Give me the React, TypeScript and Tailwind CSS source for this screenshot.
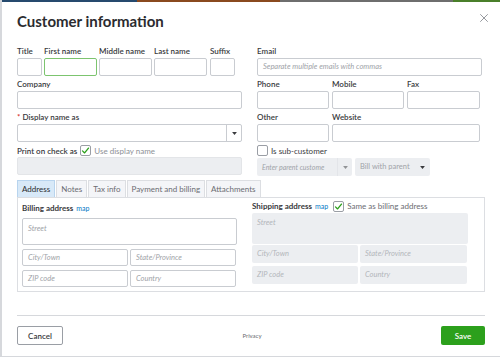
import React from 'react';

const Label: React.FC<{ children: React.ReactNode; className?: string }> = ({ children, className = '' }) => (
    <div className={`h-[12px] leading-[12px] text-[8px] font-semibold text-[#393a3d] ${className}`}>{children}</div>
);

const Input: React.FC<{ className?: string; placeholder?: string; disabled?: boolean }> = ({ className = '', placeholder, disabled }) => (
    <div
        className={`h-[18px] rounded-[2px] border flex items-center px-[5px] text-[7.5px] italic text-[#a0a3a8] ${
            disabled ? 'bg-[#eceef1] border-[#e3e5e8]' : 'bg-white border-[#c9ccd1]'
        } ${className}`}
    >
        {placeholder}
    </div>
);

const Check: React.FC<{ checked?: boolean }> = ({ checked }) => (
    <div className="w-[11px] h-[11px] border border-[#9a9ea5] rounded-[2px] bg-white flex items-center justify-center">
        {checked && (
            <svg viewBox="0 0 12 12" className="w-[9px] h-[9px]">
                <path d="M2 6.5 L4.8 9.2 L10 2.8" fill="none" stroke="#2ca01c" strokeWidth="1.8" strokeLinecap="round" strokeLinejoin="round" />
            </svg>
        )}
    </div>
);

const Caret: React.FC = () => (
    <svg viewBox="0 0 8 5" className="w-[5px] h-[3px]">
        <path d="M0 0 L8 0 L4 5 Z" fill="#393a3d" />
    </svg>
);

const Box: React.FC<{ children: React.ReactNode; className?: string; filled?: boolean }> = ({ children, className = '', filled }) => (
    <div
        className={`rounded-[2px] px-[5px] flex text-[7.5px] italic ${
            filled ? 'bg-[#eceef1] text-[#b3b6bb]' : 'border border-[#c9ccd1] text-[#a0a3a8]'
        } ${className}`}
    >
        {children}
    </div>
);

export default function App() {
    const tabs = ['Address', 'Notes', 'Tax info', 'Payment and billing', 'Attachments'];

    return (
        <div className="w-[500px] h-[360px] bg-white overflow-hidden font-['Lato',sans-serif] text-[#393a3d]">
            <div className="h-[357px] border-l-[2px] border-b border-[#d6d8dc] flex flex-col">
                {/* top strip */}
                <div className="flex h-[2px] shrink-0">
                    <div className="w-[135px] bg-[#264a6e]" />
                    <div className="w-[143px] bg-[#8a4a1f]" />
                    <div className="w-[173px] bg-[#6e6e6e]" />
                    <div className="flex-1 bg-[#4a7f2a]" />
                </div>

                <div className="pl-[15px] pr-[15px] flex flex-col flex-1">
                    {/* header */}
                    <div className="flex items-start justify-between mt-[9px] h-[22px]">
                        <h1 className="text-[15px] leading-[20px] font-bold text-[#2b2c2f]">Customer information</h1>
                        <svg viewBox="0 0 12 12" className="w-[10px] h-[10px] mt-[2px] mr-[-4px]">
                            <path d="M1.5 1.5 L10.5 10.5 M10.5 1.5 L1.5 10.5" stroke="#8d9096" strokeWidth="1.1" />
                        </svg>
                    </div>

                    {/* form columns */}
                    <div className="flex gap-[15px] mt-[12px]">
                        {/* left column */}
                        <div className="w-[225px] flex flex-col">
                            <div className="flex gap-[2px]">
                                <div className="w-[25px]">
                                    <Label>Title</Label>
                                    <Input className="mt-[1px]" />
                                </div>
                                <div className="w-[53px]">
                                    <Label>First name</Label>
                                    <Input className="mt-[1px] !border-[#7cc46f]" />
                                </div>
                                <div className="w-[53px]">
                                    <Label>Middle name</Label>
                                    <Input className="mt-[1px]" />
                                </div>
                                <div className="w-[53px]">
                                    <Label>Last name</Label>
                                    <Input className="mt-[1px]" />
                                </div>
                                <div className="w-[25px] ml-[1px]">
                                    <Label>Suffix</Label>
                                    <Input className="mt-[1px]" />
                                </div>
                            </div>

                            <Label className="mt-[2px]">Company</Label>
                            <Input className="mt-[1px]" />

                            <Label className="mt-[2px]">
                                <span className="text-[#d52b1e]">*</span> Display name as
                            </Label>
                            <div className="mt-[1px] h-[18px] rounded-[2px] border border-[#c9ccd1] flex">
                                <div className="flex-1" />
                                <div className="w-[15px] border-l border-[#c9ccd1] flex items-center justify-center">
                                    <Caret />
                                </div>
                            </div>

                            <div className="mt-[3px] h-[11px] flex items-center gap-[2px]">
                                <span className="text-[8px] font-semibold mr-[1px]">Print on check as</span>
                                <Check checked />
                                <span className="text-[8px] text-[#8d9096] ml-[1px]">Use display name</span>
                            </div>
                            <Input className="mt-[1px]" disabled />
                        </div>

                        {/* right column */}
                        <div className="w-[225px] flex flex-col">
                            <Label>Email</Label>
                            <Input className="mt-[1px]" placeholder="Separate multiple emails with commas" />

                            <div className="flex gap-[3px] mt-[2px]">
                                <div className="w-[72px]">
                                    <Label>Phone</Label>
                                    <Input className="mt-[1px]" />
                                </div>
                                <div className="w-[72px]">
                                    <Label>Mobile</Label>
                                    <Input className="mt-[1px]" />
                                </div>
                                <div className="w-[73px]">
                                    <Label>Fax</Label>
                                    <Input className="mt-[1px]" />
                                </div>
                            </div>

                            <div className="flex gap-[3px] mt-[2px]">
                                <div className="w-[72px]">
                                    <Label>Other</Label>
                                    <Input className="mt-[1px]" />
                                </div>
                                <div className="w-[148px]">
                                    <Label>Website</Label>
                                    <Input className="mt-[1px]" />
                                </div>
                            </div>

                            <div className="mt-[3px] h-[11px] flex items-center gap-[3px]">
                                <Check />
                                <span className="text-[8px]">Is sub-customer</span>
                            </div>

                            <div className="mt-[2px] flex gap-[3px]">
                                <div className="w-[95px] h-[18px] rounded-[2px] bg-[#eceef1] flex">
                                    <div className="flex-1 flex items-center px-[5px] text-[7px] italic text-[#a0a3a8] overflow-hidden whitespace-nowrap">
                                        Enter parent custome
                                    </div>
                                    <div className="w-[15px] border-l border-[#dcdee2] flex items-center justify-center opacity-50">
                                        <Caret />
                                    </div>
                                </div>
                                <div className="w-[75px] h-[18px] rounded-[2px] bg-[#eceef1] flex items-center justify-between px-[5px]">
                                    <span className="text-[7.5px] text-[#a0a3a8]">Bill with parent</span>
                                    <Caret />
                                </div>
                            </div>
                        </div>
                    </div>

                    {/* tabs */}
                    <div className="flex mt-[4px] h-[17px]">
                        {tabs.map((t, i) => (
                            <div
                                key={t}
                                className={`h-[17px] px-[4px] mr-[1px] flex items-center text-[8px] border border-b-0 ${
                                    i === 0
                                        ? 'bg-[#d8e9f8] border-[#b8d4ee] text-[#2b2c2f]'
                                        : 'bg-[#f4f5f8] border-[#dcdee2] text-[#6b6c72]'
                                }`}
                            >
                                {t}
                            </div>
                        ))}
                    </div>

                    <div className="h-[95px] border border-[#dcdee2] flex pl-[4px] pr-[16px]">
                        {/* billing */}
                        <div className="w-[215px] flex flex-col">
                            <div className="mt-[4px] h-[12px] flex items-center gap-[3px]">
                                <span className="text-[8px] font-bold">Billing address</span>
                                <span className="text-[7px] text-[#0077c5]">map</span>
                            </div>
                            <Box className="mt-[4px] h-[27px] pt-[4px]">Street</Box>
                            <div className="flex gap-[2px] mt-[4px]">
                                <Box className="w-[106px] h-[17px] items-center">City/Town</Box>
                                <Box className="w-[106px] h-[17px] items-center">State/Province</Box>
                            </div>
                            <div className="flex gap-[2px] mt-[4px]">
                                <Box className="w-[106px] h-[17px] items-center">ZIP code</Box>
                                <Box className="w-[106px] h-[17px] items-center">Country</Box>
                            </div>
                        </div>

                        {/* shipping */}
                        <div className="w-[216px] ml-[15px] flex flex-col">
                            <div className="mt-[2px] h-[12px] flex items-center gap-[3px]">
                                <span className="text-[8px] font-bold">Shipping address</span>
                                <span className="text-[7px] text-[#0077c5]">map</span>
                                <span className="ml-[2px]"><Check checked /></span>
                                <span className="text-[8px] text-[#6b6c72]">Same as billing address</span>
                            </div>
                            <Box filled className="mt-[1px] h-[31px] pt-[4px]">Street</Box>
                            <div className="flex gap-[2px] mt-[1px]">
                                <Box filled className="w-[106px] h-[18px] items-center">City/Town</Box>
                                <Box filled className="w-[107px] h-[18px] items-center">State/Province</Box>
                            </div>
                            <div className="flex gap-[2px] mt-[3px]">
                                <Box filled className="w-[106px] h-[18px] items-center">ZIP code</Box>
                                <Box filled className="w-[107px] h-[18px] items-center">Country</Box>
                            </div>
                        </div>
                    </div>

                    {/* footer */}
                    <div className="mt-[23px] border-t border-[#d6d8dc]" />
                    <div className="mt-[10px] flex items-center justify-between">
                        <button className="w-[46px] h-[19px] border border-[#9a9ea5] rounded-[2px] text-[8px] font-semibold bg-white">
                            Cancel
                        </button>
                        <span className="text-[6px] text-[#6b6c72]">Privacy</span>
                        <button className="w-[44px] h-[19px] rounded-[2px] bg-[#2ca01c] text-white text-[8px] font-semibold">
                            Save
                        </button>
                    </div>
                </div>
            </div>
        </div>
    );
}
